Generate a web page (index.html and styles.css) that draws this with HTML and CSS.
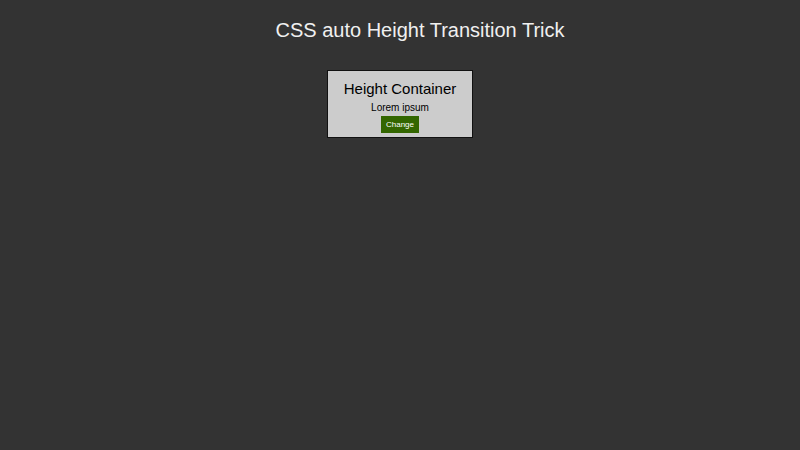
FILE: index.html
```html
<!DOCTYPE html>
<html>
<head>
<meta charset="utf-8">
<link rel="stylesheet" href="styles.css">
</head>
<body>
<h1 class="title">CSS auto Height Transition Trick</h1>
<div class="container">
  <h2 class="container-title">Height Container</h2>
  <p class="container-text">Lorem ipsum</p>
  <button class="change-btn">Change</button>
</div>
</body>
</html>
```
FILE: styles.css
```css
html, body {
  margin: 0;
  padding: 0;
  background: #333333;
  font-family: "Liberation Sans", Arial, sans-serif;
}
body {
  display: flex;
  flex-direction: column;
  align-items: center;
  min-height: 450px;
}
.title {
  margin: 19px 0 0 40px;
  font-size: 20px;
  line-height: 23px;
  font-weight: normal;
  color: #f0f0f0;
  text-align: center;
}
.container {
  margin-top: 28px;
  width: 144px;
  box-sizing: content-box;
  background: #cccccc;
  border: 1px solid #111111;
  padding: 9px 0 4px 0;
  display: flex;
  flex-direction: column;
  align-items: center;
}
.container-title {
  margin: 0;
  font-size: 15px;
  line-height: 17px;
  font-weight: normal;
  color: #000;
}
.container-text {
  margin: 5px 0 0 0;
  font-size: 10px;
  line-height: 12px;
  color: #000;
}
.change-btn {
  margin-top: 2px;
  font-family: "Liberation Sans", Arial, sans-serif;
  font-size: 8px;
  line-height: 10px;
  padding: 3.5px 4.5px;
  border: none;
  background: #336600;
  color: #ffffff;
  border-radius: 0;
}
```
